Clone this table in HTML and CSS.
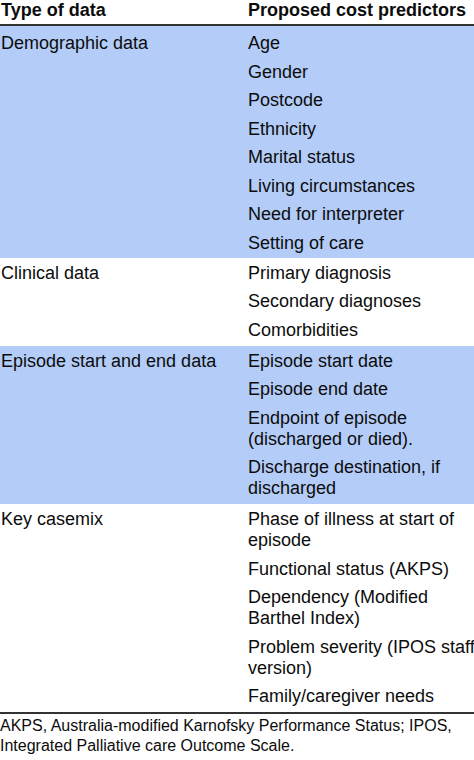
FILE: index.html
```html
<!DOCTYPE html>
<html lang="en">
<head>
<meta charset="utf-8">
<title>Cost predictors</title>
<link rel="stylesheet" href="styles.css">
</head>
<body>
<div class="table">
  <div class="row head">
    <div class="cell-left">Type of data</div>
    <div class="cell-right">Proposed cost predictors</div>
  </div>
  <div class="row shaded first">
    <div class="cell-left label">Demographic data</div>
    <ul class="items">
      <li>Age</li>
      <li>Gender</li>
      <li>Postcode</li>
      <li>Ethnicity</li>
      <li>Marital status</li>
      <li>Living circumstances</li>
      <li>Need for interpreter</li>
      <li>Setting of care</li>
    </ul>
  </div>
  <div class="row">
    <div class="cell-left label">Clinical data</div>
    <ul class="items">
      <li>Primary diagnosis</li>
      <li>Secondary diagnoses</li>
      <li>Comorbidities</li>
    </ul>
  </div>
  <div class="row shaded">
    <div class="cell-left label">Episode start and end data</div>
    <ul class="items">
      <li>Episode start date</li>
      <li>Episode end date</li>
      <li>Endpoint of episode<br>(discharged or died).</li>
      <li>Discharge destination, if<br>discharged</li>
    </ul>
  </div>
  <div class="row last">
    <div class="cell-left label">Key casemix</div>
    <ul class="items">
      <li>Phase of illness at start of<br>episode</li>
      <li>Functional status (AKPS)</li>
      <li>Dependency (Modified<br>Barthel Index)</li>
      <li>Problem severity (IPOS staff<br>version)</li>
      <li>Family/caregiver needs</li>
    </ul>
  </div>
</div>
<p class="note">AKPS, Australia-modified Karnofsky Performance Status; IPOS,<br>Integrated Palliative care Outcome Scale.</p>
</body>
</html>
```
FILE: styles.css
```css
html, body {
  margin: 0;
  padding: 0;
  background: #ffffff;
}
body {
  width: 474px;
  height: 760px;
  overflow: hidden;
  font-family: "Liberation Sans", Arial, sans-serif;
  color: #0c0c0c;
}
.table {
  display: flex;
  flex-direction: column;
  border-bottom: 2px solid #333333;
}
.row {
  display: flex;
  padding: 1.5px 0 1px;
}
.row.first {
  padding-top: 3.5px;
  padding-bottom: 0;
}
.row.head {
  padding: 0 0 3px;
  font-weight: bold;
  border-bottom: 2px solid #333333;
  font-size: 18px;
  line-height: 21px;
}
.shaded {
  background: #b4ccf8;
}
.cell-left {
  width: 247px;
  flex: none;
  padding-left: 1px;
  font-size: 18px;
  line-height: 21px;
}
.label {
  padding-top: 3.75px;
}
.cell-right {
  white-space: nowrap;
}
.items {
  list-style: none;
  margin: 0;
  padding: 0;
  font-size: 18px;
  line-height: 21px;
  white-space: nowrap;
}
.items li {
  padding: 3.75px 0;
}
.note {
  margin: 0;
  padding: 2px 0 0 0;
  font-size: 16px;
  line-height: 20px;
  white-space: nowrap;
}
```
